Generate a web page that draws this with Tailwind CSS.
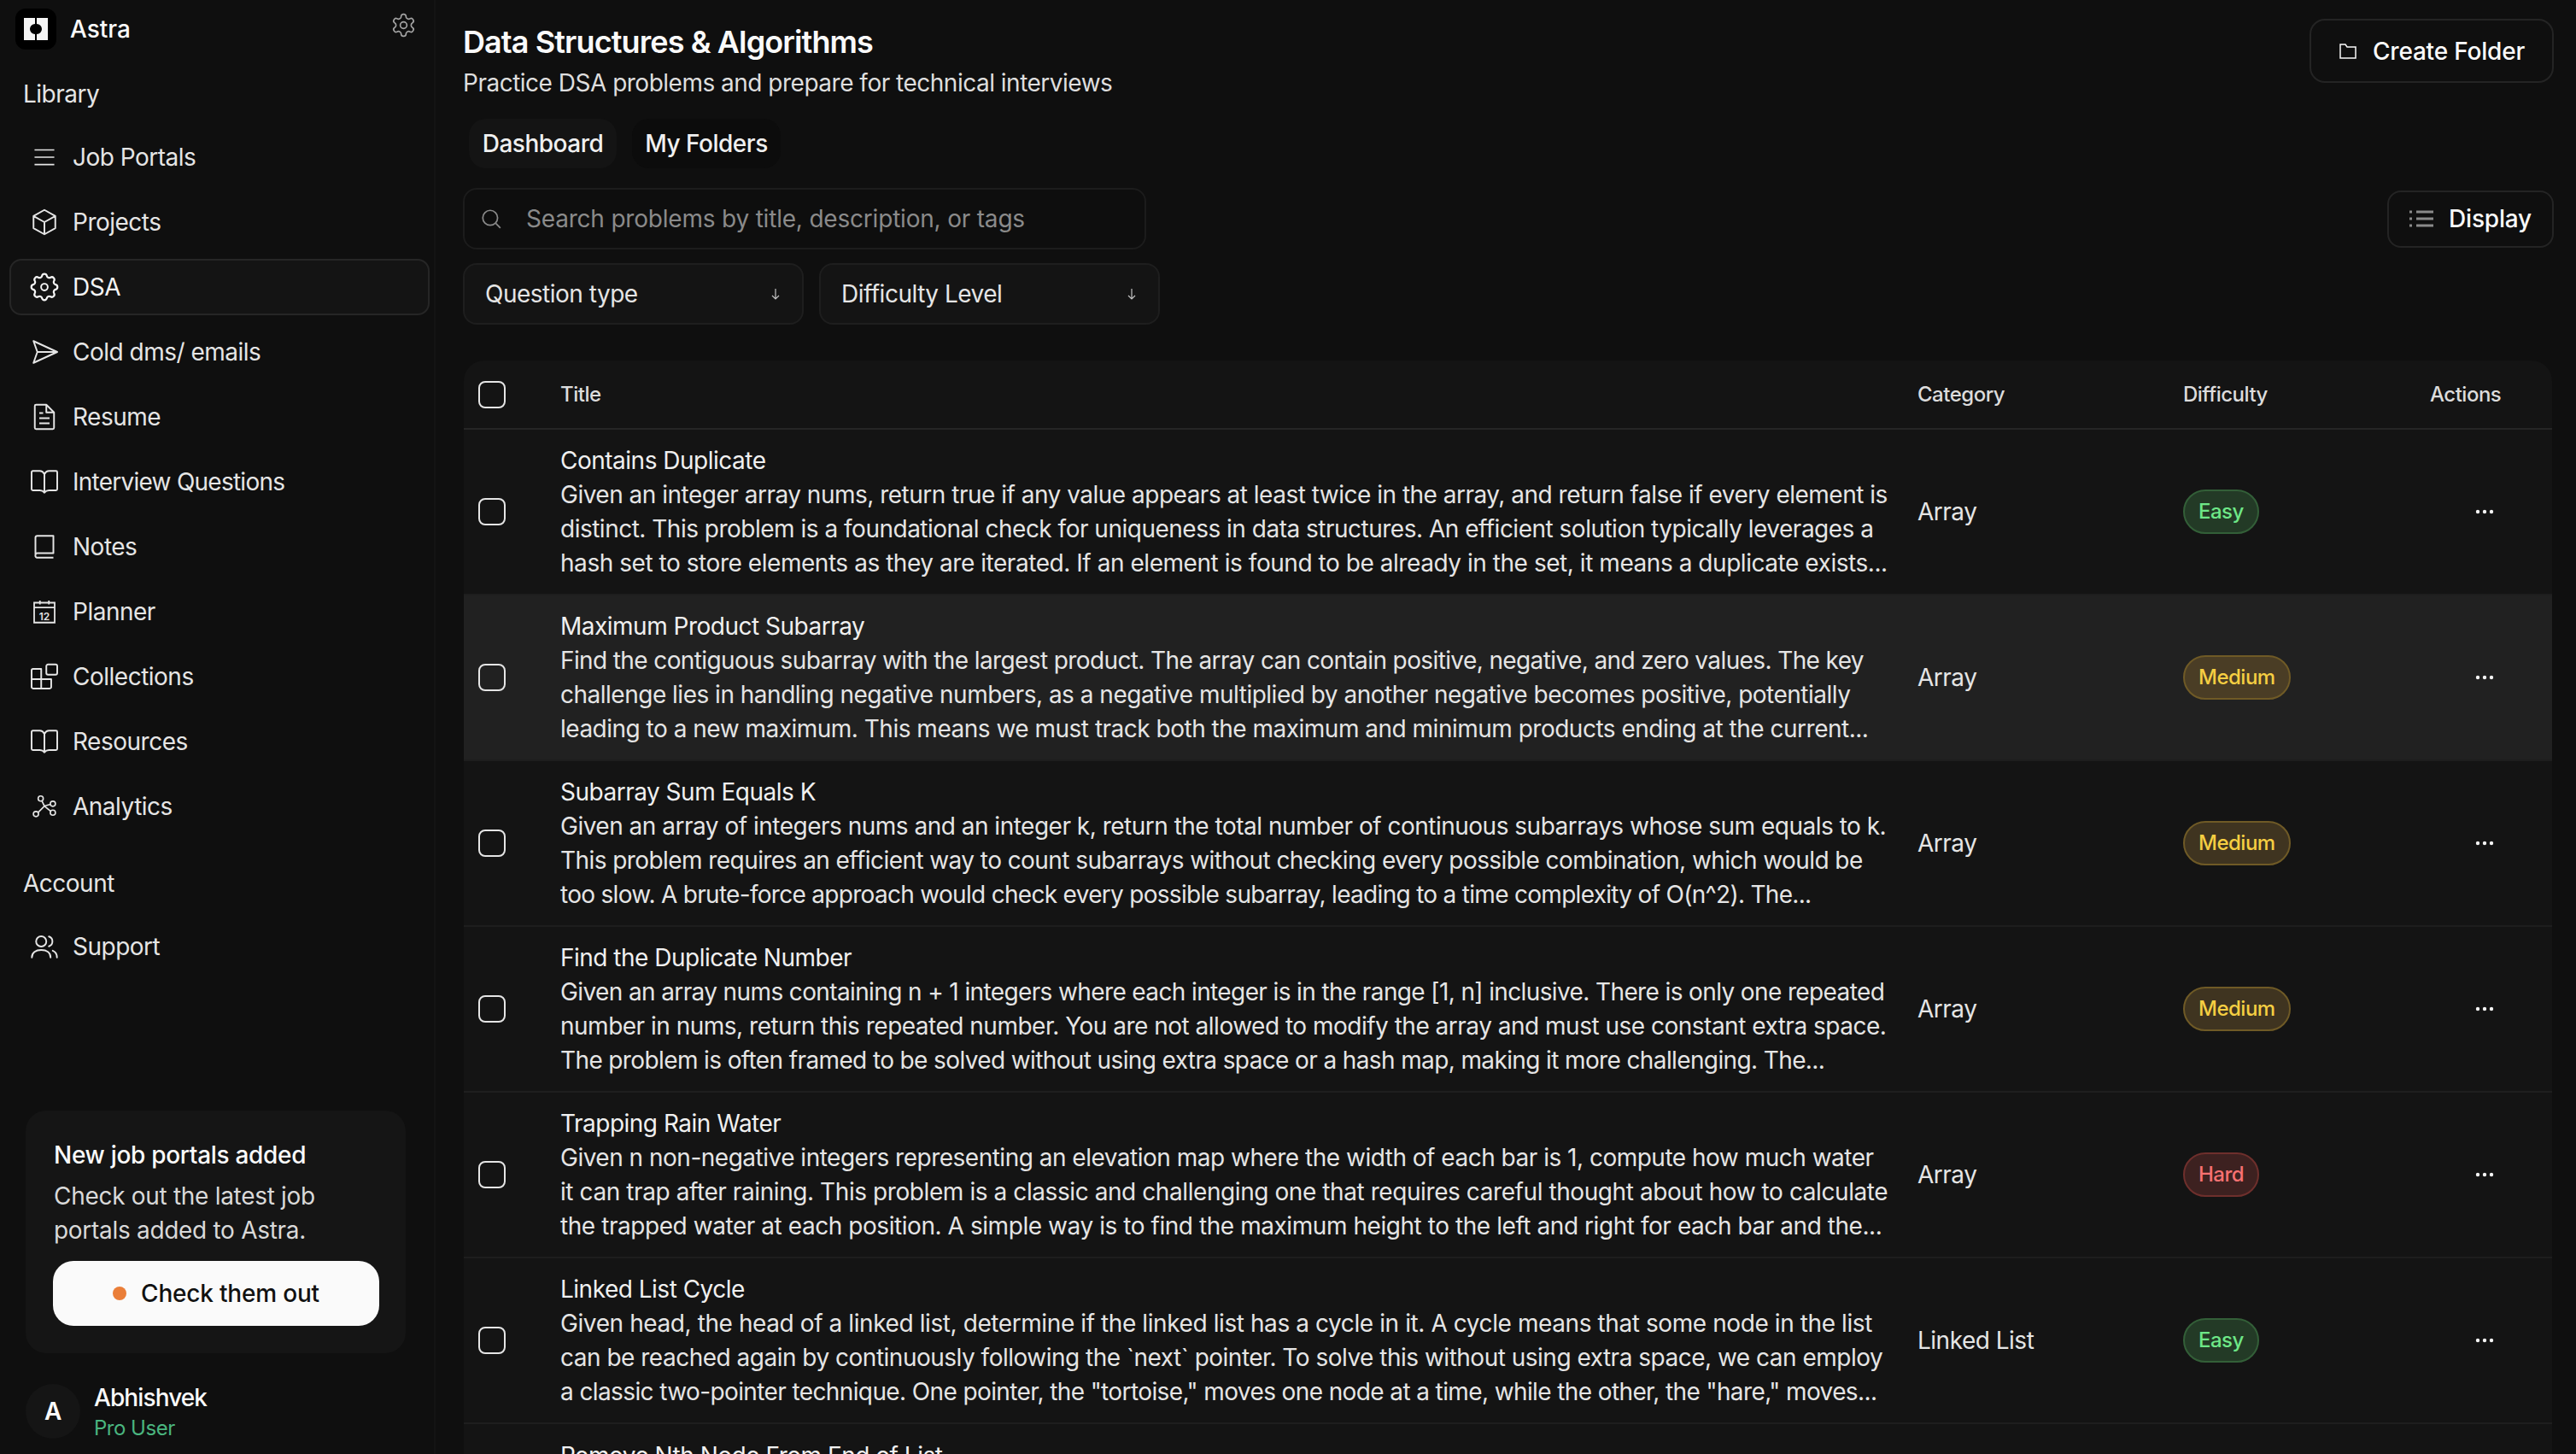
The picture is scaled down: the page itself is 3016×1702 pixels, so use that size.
<!DOCTYPE html>
<html lang="en">
<head>
  <meta charset="UTF-8">
  <meta name="viewport" content="width=device-width, initial-scale=1.0">
  <title>Astra - DSA</title>
  <script src="https://cdn.jsdelivr.net/npm/@tailwindcss/browser@4"></script>
</head>
<body class="bg-[#0f0f0f] text-[#e5e5e5] font-['Inter',sans-serif] text-[28px] tracking-[-0.5px] h-screen overflow-hidden flex">

  <!-- sidebar -->
  <aside class="w-[510px] h-[1702px] shrink-0 border-r-2 border-[#141414] flex flex-col pl-[11px] pr-[5px]">
    <div class="flex items-start pl-[7px] pt-[10px] pr-[15px] h-[76px]">
      <div class="w-[48px] h-[48px] rounded-[12px] bg-black flex items-center justify-center">
        <svg width="28" height="28" viewBox="0 0 28 28"><path fill="#f5f5f5" d="M0 1h13v7a6 6 0 0 0 0 12v7H0zM15 1h13v26H15v-7a6 6 0 0 0 0-12z"/></svg>
      </div>
      <span class="ml-[16px] mt-[7px] leading-[34px] font-medium text-[#fafafa] tracking-normal">Astra</span>
      <svg class="ml-auto mt-[4px]" width="31" height="31" viewBox="0 0 24 24" fill="none" stroke="#a3a3a3" stroke-width="1.3"><path d="M12.22 2h-.44a2 2 0 0 0-2 2v.18a2 2 0 0 1-1 1.73l-.43.25a2 2 0 0 1-2 0l-.15-.08a2 2 0 0 0-2.73.73l-.22.38a2 2 0 0 0 .73 2.73l.15.1a2 2 0 0 1 1 1.72v.51a2 2 0 0 1-1 1.74l-.15.09a2 2 0 0 0-.73 2.73l.22.38a2 2 0 0 0 2.73.73l.15-.08a2 2 0 0 1 2 0l.43.25a2 2 0 0 1 1 1.73V20a2 2 0 0 0 2 2h.44a2 2 0 0 0 2-2v-.18a2 2 0 0 1 1-1.73l.43-.25a2 2 0 0 1 2 0l.15.08a2 2 0 0 0 2.73-.73l.22-.39a2 2 0 0 0-.73-2.73l-.15-.08a2 2 0 0 1-1-1.74v-.5a2 2 0 0 1 1-1.74l.15-.09a2 2 0 0 0 .73-2.73l-.22-.38a2 2 0 0 0-2.73-.73l-.15.08a2 2 0 0 1-2 0l-.43-.25a2 2 0 0 1-1-1.73V4a2 2 0 0 0-2-2z"/><circle cx="12" cy="12" r="3"/></svg>
    </div>

    <div class="pl-[16px] h-[40px] mt-[14px] leading-[40px]">Library</div>

    <nav class="mt-[21px] flex flex-col gap-[10px]">
      <a class="h-[66px] flex items-center pl-[21px] gap-[15px] border-2 border-transparent rounded-[14px]">
        <svg class="w-[36px] h-[36px]" viewBox="0 0 24 24" fill="none" stroke="#e5e5e5" stroke-width="1.1"><path d="M4.300 6.300h15.400M4.300 12h15.400M4.300 17.700h15.400"/></svg>
        Job Portals
      </a>
      <a class="h-[66px] flex items-center pl-[21px] gap-[15px] border-2 border-transparent rounded-[14px]">
        <svg class="w-[36px] h-[36px]" viewBox="0 0 24 24" fill="none" stroke="#e5e5e5" stroke-width="1.3" stroke-linejoin="round"><path d="M12 2.500l8.500 4.800v9.400L12 21.500l-8.500-4.800V7.300zM3.700 7.400L12 12l8.300-4.600M12 12v9.500"/></svg>
        Projects
      </a>
      <a class="h-[66px] flex items-center pl-[21px] gap-[15px] border-2 border-[#262626] bg-[#141414] rounded-[14px] text-[#f5f5f5]">
        <svg class="w-[36px] h-[36px]" viewBox="0 0 24 24" fill="none" stroke="#f5f5f5" stroke-width="1.3"><path d="M10.325 4.317c.426 -1.756 2.924 -1.756 3.35 0a1.724 1.724 0 0 0 2.573 1.066c1.543 -.94 3.31 .826 2.37 2.37a1.724 1.724 0 0 0 1.065 2.572c1.756 .426 1.756 2.924 0 3.35a1.724 1.724 0 0 0 -1.066 2.573c.94 1.543 -.826 3.31 -2.37 2.37a1.724 1.724 0 0 0 -2.572 1.065c-.426 1.756 -2.924 1.756 -3.35 0a1.724 1.724 0 0 0 -2.573 -1.066c-1.543 .94 -3.31 -.826 -2.37 -2.37a1.724 1.724 0 0 0 -1.065 -2.572c-1.756 -.426 -1.756 -2.924 0 -3.35a1.724 1.724 0 0 0 1.066 -2.573c-.94 -1.543 .826 -3.31 2.37 -2.370c1 .608 2.296 .07 2.572 -1.065z" transform="translate(-1.600 -1.600) scale(1.133)"/><circle cx="12" cy="12" r="2.600"/></svg>
        DSA
      </a>
      <a class="h-[66px] flex items-center pl-[21px] gap-[15px] border-2 border-transparent rounded-[14px]">
        <svg class="w-[36px] h-[36px]" viewBox="0 0 24 24" fill="none" stroke="#e5e5e5" stroke-width="1.3" stroke-linejoin="round"><path d="M3.500 3.500L22 12 3.500 20.500 6.500 12zM6.500 12H22"/></svg>
        Cold dms/ emails
      </a>
      <a class="h-[66px] flex items-center pl-[21px] gap-[15px] border-2 border-transparent rounded-[14px]">
        <svg class="w-[36px] h-[36px]" viewBox="0 0 24 24" fill="none" stroke="#e5e5e5" stroke-width="1.3" stroke-linejoin="round"><path d="M5.500 2.500h8l6 6v12a1 1 0 0 1-1 1h-13a1 1 0 0 1-1-1v-17a1 1 0 0 1 1-1zM13.500 2.500v6h6M8 9h3M8 13h8M8 17h8"/></svg>
        Resume
      </a>
      <a class="h-[66px] flex items-center pl-[21px] gap-[15px] border-2 border-transparent rounded-[14px]">
        <svg class="w-[36px] h-[36px]" viewBox="0 0 24 24" fill="none" stroke="#e5e5e5" stroke-width="1.3" stroke-linejoin="round"><path d="M12 20.500c-1-1.300-2-1.800-3.500-1.800H3a1 1 0 0 1-1-1V4.500a1 1 0 0 1 1-1h5.500C10 3.500 11.200 4.500 12 6c.8-1.500 2-2.500 3.500-2.500H21a1 1 0 0 1 1 1v13.200a1 1 0 0 1-1 1h-5.500c-1.500 0-2.500.5-3.500 1.800zM12 6v14.500"/></svg>
        <span class="tracking-[-0.75px]">Interview Questions</span>
      </a>
      <a class="h-[66px] flex items-center pl-[21px] gap-[15px] border-2 border-transparent rounded-[14px]">
        <svg class="w-[36px] h-[36px]" viewBox="0 0 24 24" fill="none" stroke="#e5e5e5" stroke-width="1.3" stroke-linejoin="round"><path d="M5 18.300V5a1.500 1.500 0 0 1 1.500-1.500H19V17H6.500A1.500 1.500 0 0 0 5 18.500 1.500 1.500 0 0 0 6.500 20.500H19"/></svg>
        Notes
      </a>
      <a class="h-[66px] flex items-center pl-[21px] gap-[15px] border-2 border-transparent rounded-[14px]">
        <svg class="w-[36px] h-[36px]" viewBox="0 0 24 24" fill="none" stroke="#e5e5e5" stroke-width="1.200"><path d="M4 5h16v15.500H4zM4 8.800h16M8.500 3.400v3M15.500 3.400v3"/><text x="12" y="18.400" text-anchor="middle" font-size="8" font-weight="600" letter-spacing="0" fill="#e5e5e5" stroke="none" font-family="Inter, sans-serif">12</text></svg>
        Planner
      </a>
      <a class="h-[66px] flex items-center pl-[21px] gap-[15px] border-2 border-transparent rounded-[14px]">
        <svg class="w-[36px] h-[36px]" viewBox="0 0 24 24" fill="none" stroke="#e5e5e5" stroke-width="1.300" stroke-linejoin="round"><rect x="13.500" y="2.500" width="8.500" height="8" rx="1.300"/><path d="M3.200 6H9.500v8H2V7.200A1.200 1.200 0 0 1 3.200 6zM2 14h7.500v7.300H3.200A1.200 1.200 0 0 1 2 20.100zM9.500 14h7.800v6.100a1.200 1.200 0 0 1-1.200 1.200H9.500z"/></svg>
        Collections
      </a>
      <a class="h-[66px] flex items-center pl-[21px] gap-[15px] border-2 border-transparent rounded-[14px]">
        <svg class="w-[36px] h-[36px]" viewBox="0 0 24 24" fill="none" stroke="#e5e5e5" stroke-width="1.300" stroke-linejoin="round"><path d="M12 20.500c-1-1.300-2-1.800-3.500-1.800H3a1 1 0 0 1-1-1V4.500a1 1 0 0 1 1-1h5.500C10 3.500 11.200 4.500 12 6c.8-1.500 2-2.500 3.500-2.500H21a1 1 0 0 1 1 1v13.200a1 1 0 0 1-1 1h-5.500c-1.500 0-2.500.5-3.500 1.800zM12 6v14.500"/></svg>
        Resources
      </a>
      <a class="h-[66px] flex items-center pl-[21px] gap-[15px] border-2 border-transparent rounded-[14px]">
        <svg class="w-[36px] h-[36px]" viewBox="0 0 24 24" fill="none" stroke="#e5e5e5" stroke-width="1.100"><circle cx="9.100" cy="5.800" r="2"/><circle cx="5.400" cy="17.900" r="2"/><circle cx="18.600" cy="9.900" r="2"/><circle cx="18.600" cy="16.800" r="2"/><path d="M10 7.600l2 4.100M7 16.700l5-5M16.700 10.300l-4.700 1.400M16.900 15.700l-4.900-4"/></svg>
        Analytics
      </a>
    </nav>

    <div class="pl-[16px] h-[40px] mt-[37px] leading-[40px]">Account</div>

    <a class="mt-[21px] h-[66px] flex items-center pl-[21px] gap-[15px] border-2 border-transparent rounded-[14px]">
      <svg class="w-[36px] h-[36px]" viewBox="0 0 24 24" fill="none" stroke="#e5e5e5" stroke-width="1.300" stroke-linecap="round"><circle cx="9.500" cy="8" r="4"/><path d="M2.200 20.500c0-3.800 3-5.800 7.300-5.800s7.300 2 7.300 5.800M15.500 4.200a4 4 0 0 1 0 7.600M18.500 15.200c2 .8 3.300 2.800 3.300 5.300"/></svg>
      Support
    </a>

    <div class="mt-auto ml-[19px] w-[445px] h-[284px] rounded-[24px] bg-[#151515] px-[33px] pt-[32px]">
      <div class="font-medium text-[#fafafa] leading-[40px] tracking-[-0.3px]">New job portals added</div>
      <p class="mt-[8px] leading-[40px] text-[#d9d9d9] tracking-[-0.3px]">Check out the latest job<br>portals added to Astra.</p>
      <button class="mt-[16px] -ml-[1px] w-[382px] h-[76px] rounded-[24px] bg-[#fafafa] text-[#111111] font-medium tracking-[-0.2px] flex items-center justify-center gap-[17px]">
        <span class="w-[16px] h-[16px] rounded-full bg-[#ea7e38]"></span>Check them out
      </button>
    </div>

    <div class="ml-[19px] mt-[36px] mb-[18px] h-[64px] flex items-center gap-[16px]">
      <div class="w-[64px] h-[64px] rounded-full bg-[#151515] flex items-center justify-center font-semibold text-[#fafafa]">A</div>
      <div class="pt-[4px]">
        <div class="leading-[36px] font-medium text-[#fafafa] tracking-[-0.9px]">Abhishvek</div>
        <div class="leading-[36px] text-[24px] text-[#4ab57f]">Pro User</div>
      </div>
    </div>
  </aside>

  <!-- main -->
  <main class="flex-1 min-w-0 pl-[32px] pr-[26px]">
    <header class="flex justify-between items-start pt-[22px]">
      <div class="pt-[3px]">
        <h1 class="text-[36px] leading-[48px] font-semibold tracking-[-0.9px] text-[#fafafa]">Data Structures &amp; Algorithms</h1>
        <p class="mt-[4px] leading-[40px] text-[#dedede]">Practice DSA problems and prepare for technical interviews</p>
      </div>
      <button class="w-[286px] h-[75px] rounded-[18px] border-2 border-[#242424] flex items-center justify-center gap-[18px] font-medium tracking-[-0.2px] text-[#fafafa]">
        <svg width="22" height="22" viewBox="0 0 22 22" fill="none" stroke="#fafafa" stroke-width="1.500"><path d="M2 3h6l2 3h10v13H2z"/></svg>
        Create Folder
      </button>
    </header>

    <div class="flex gap-[18px] ml-[7px] mt-[22px] font-medium text-[#f0f0f0]">
      <button class="h-[58px] w-[173px] rounded-[20px] bg-[#141414]">Dashboard</button>
      <button class="h-[58px] w-[174px] rounded-[20px] bg-[#0c0c0c]">My Folders</button>
    </div>

    <div class="flex justify-between items-center mt-[23px]">
      <div class="w-[800px] h-[72px] rounded-[16px] border-2 border-[#1c1c1c] bg-[#0e0e0e] flex items-center pl-[18px] gap-[28px] text-[#8a8a8a] tracking-[-0.2px]">
        <svg width="26" height="26" viewBox="0 0 24 24" fill="none" stroke="#8a8a8a" stroke-width="1.600"><circle cx="11" cy="11" r="8"/><path d="M17 17l5 5"/></svg>
        Search problems by title, description, or tags
      </div>
      <button class="w-[195px] h-[67px] rounded-[16px] border-2 border-[#242424] flex items-center justify-center gap-[18px] font-medium tracking-[-0.2px] text-[#fafafa]">
        <svg width="28" height="22" viewBox="0 0 28 22" stroke-width="3"><path d="M8 3h20M8 11h20M8 19h20" stroke="#8a8a8a"/><path d="M0 3h3M0 11h3M0 19h3" stroke="#8a8a8a"/></svg>
        Display
      </button>
    </div>

    <div class="flex gap-[18px] mt-[16px]">
      <div class="w-[399px] h-[72px] rounded-[16px] border-2 border-[#1e1e1e] bg-[#141414] flex items-center justify-between pl-[24px] pr-[26px]">
        Question type
        <svg width="10" height="14" viewBox="0 0 10 14" fill="none" stroke="#c4c4c4" stroke-width="1.200"><path d="M5 1v12M1 9l4 4 4-4"/></svg>
      </div>
      <div class="w-[399px] h-[72px] rounded-[16px] border-2 border-[#1e1e1e] bg-[#141414] flex items-center justify-between pl-[24px] pr-[26px]">
        Difficulty Level
        <svg width="10" height="14" viewBox="0 0 10 14" fill="none" stroke="#c4c4c4" stroke-width="1.200"><path d="M5 1v12M1 9l4 4 4-4"/></svg>
      </div>
    </div>

    <!-- problems table -->
    <div class="mt-[42px] ml-[1px] w-[2445px] bg-[#141414] rounded-t-[24px]">
      <div class="grid grid-cols-[113px_1589px_311px_289px_1fr] items-center h-[81px] border-b-2 border-[#262626] text-[24px] font-medium text-[#dcdcdc]">
        <span class="ml-[17px] w-[32px] h-[32px] rounded-[8px] border-2 border-[#e5e5e5]"></span>
        <span>Title</span><span>Category</span><span>Difficulty</span><span>Actions</span>
      </div>

      <div class="grid grid-cols-[113px_1589px_311px_289px_1fr] items-center h-[194px] border-b-2 border-[#1e1e1e]">
        <span class="ml-[17px] w-[32px] h-[32px] rounded-[8px] border-2 border-[#e5e5e5]"></span>
        <div class="leading-[40px] whitespace-nowrap"><div class="text-[#f0f0f0]">Contains Duplicate</div>Given an integer array nums, return true if any value appears at least twice in the array, and return false if every element is<br>distinct. This problem is a foundational check for uniqueness in data structures. An efficient solution typically leverages a<br><span class="tracking-[-0.45px]">hash set to store elements as they are iterated. If an element is found to be already in the set, it means a duplicate exists...</span></div>
        <span>Array</span>
        <span class="justify-self-start h-[52px] px-[16px] flex items-center rounded-full border-2 border-[#335f38] bg-[#233a26] text-[#6ee787] text-[24px] font-medium">Easy</span>
        <svg class="ml-[53px]" width="22" height="6" viewBox="0 0 22 6" fill="#f5f5f5"><circle cx="3" cy="3" r="2.200"/><circle cx="11" cy="3" r="2.200"/><circle cx="19" cy="3" r="2.200"/></svg>
      </div>

      <div class="grid grid-cols-[113px_1589px_311px_289px_1fr] items-center h-[194px] border-b-2 border-[#1e1e1e] bg-[#212121]">
        <span class="ml-[17px] w-[32px] h-[32px] rounded-[8px] border-2 border-[#e5e5e5]"></span>
        <div class="leading-[40px] whitespace-nowrap"><div class="text-[#f0f0f0]">Maximum Product Subarray</div><span class="tracking-[-0.61px]">Find the contiguous subarray with the largest product. The array can contain positive, negative, and zero values. The key</span><br>challenge lies in handling negative numbers, as a negative multiplied by another negative becomes positive, potentially<br>leading to a new maximum. This means we must track both the maximum and minimum products ending at the current...</div>
        <span>Array</span>
        <span class="justify-self-start h-[52px] px-[16px] flex items-center rounded-full border-2 border-[#6f5a26] bg-[#4a3d25] text-[#f5ce42] text-[24px] font-medium">Medium</span>
        <svg class="ml-[53px]" width="22" height="6" viewBox="0 0 22 6" fill="#f5f5f5"><circle cx="3" cy="3" r="2.200"/><circle cx="11" cy="3" r="2.200"/><circle cx="19" cy="3" r="2.200"/></svg>
      </div>

      <div class="grid grid-cols-[113px_1589px_311px_289px_1fr] items-center h-[194px] border-b-2 border-[#1e1e1e]">
        <span class="ml-[17px] w-[32px] h-[32px] rounded-[8px] border-2 border-[#e5e5e5]"></span>
        <div class="leading-[40px] whitespace-nowrap"><div class="text-[#f0f0f0]">Subarray Sum Equals K</div>Given an array of integers nums and an integer k, return the total number of continuous subarrays whose sum equals to k.<br><span class="tracking-[-0.57px]">This problem requires an efficient way to count subarrays without checking every possible combination, which would be</span><br><span class="tracking-[-0.7px]">too slow. A brute-force approach would check every possible subarray, leading to a time complexity of O(n^2). The...</span></div>
        <span>Array</span>
        <span class="justify-self-start h-[52px] px-[16px] flex items-center rounded-full border-2 border-[#6f5a26] bg-[#3f3420] text-[#f5ce42] text-[24px] font-medium">Medium</span>
        <svg class="ml-[53px]" width="22" height="6" viewBox="0 0 22 6" fill="#f5f5f5"><circle cx="3" cy="3" r="2.200"/><circle cx="11" cy="3" r="2.200"/><circle cx="19" cy="3" r="2.200"/></svg>
      </div>

      <div class="grid grid-cols-[113px_1589px_311px_289px_1fr] items-center h-[194px] border-b-2 border-[#1e1e1e]">
        <span class="ml-[17px] w-[32px] h-[32px] rounded-[8px] border-2 border-[#e5e5e5]"></span>
        <div class="leading-[40px] whitespace-nowrap"><div class="text-[#f0f0f0]">Find the Duplicate Number</div><span class="tracking-[-0.62px]">Given an array nums containing n + 1 integers where each integer is in the range [1, n] inclusive. There is only one repeated</span><br>number in nums, return this repeated number. You are not allowed to modify the array and must use constant extra space.<br><span class="tracking-[-0.62px]">The problem is often framed to be solved without using extra space or a hash map, making it more challenging. The...</span></div>
        <span>Array</span>
        <span class="justify-self-start h-[52px] px-[16px] flex items-center rounded-full border-2 border-[#6f5a26] bg-[#3f3420] text-[#f5ce42] text-[24px] font-medium">Medium</span>
        <svg class="ml-[53px]" width="22" height="6" viewBox="0 0 22 6" fill="#f5f5f5"><circle cx="3" cy="3" r="2.200"/><circle cx="11" cy="3" r="2.200"/><circle cx="19" cy="3" r="2.200"/></svg>
      </div>

      <div class="grid grid-cols-[113px_1589px_311px_289px_1fr] items-center h-[194px] border-b-2 border-[#1e1e1e]">
        <span class="ml-[17px] w-[32px] h-[32px] rounded-[8px] border-2 border-[#e5e5e5]"></span>
        <div class="leading-[40px] whitespace-nowrap"><div class="text-[#f0f0f0]">Trapping Rain Water</div>Given n non-negative integers representing an elevation map where the width of each bar is 1, compute how much water<br><span class="tracking-[-0.42px]">it can trap after raining. This problem is a classic and challenging one that requires careful thought about how to calculate</span><br><span class="tracking-[-0.44px]">the trapped water at each position. A simple way is to find the maximum height to the left and right for each bar and the...</span></div>
        <span>Array</span>
        <span class="justify-self-start h-[52px] px-[16px] flex items-center rounded-full border-2 border-[#6e2f2c] bg-[#3d2120] text-[#f87171] text-[24px] font-medium">Hard</span>
        <svg class="ml-[53px]" width="22" height="6" viewBox="0 0 22 6" fill="#f5f5f5"><circle cx="3" cy="3" r="2.200"/><circle cx="11" cy="3" r="2.200"/><circle cx="19" cy="3" r="2.200"/></svg>
      </div>

      <div class="grid grid-cols-[113px_1589px_311px_289px_1fr] items-center h-[194px] border-b-2 border-[#1e1e1e]">
        <span class="ml-[17px] w-[32px] h-[32px] rounded-[8px] border-2 border-[#e5e5e5]"></span>
        <div class="leading-[40px] whitespace-nowrap"><div class="text-[#f0f0f0]">Linked List Cycle</div><span class="tracking-[-0.41px]">Given head, the head of a linked list, determine if the linked list has a cycle in it. A cycle means that some node in the list</span><br>can be reached again by continuously following the `next` pointer. To solve this without using extra space, we can employ<br><span class="tracking-[-0.61px]">a classic two-pointer technique. One pointer, the "tortoise," moves one node at a time, while the other, the "hare," moves...</span></div>
        <span>Linked List</span>
        <span class="justify-self-start h-[52px] px-[16px] flex items-center rounded-full border-2 border-[#335f38] bg-[#233a26] text-[#6ee787] text-[24px] font-medium">Easy</span>
        <svg class="ml-[53px]" width="22" height="6" viewBox="0 0 22 6" fill="#f5f5f5"><circle cx="3" cy="3" r="2.200"/><circle cx="11" cy="3" r="2.200"/><circle cx="19" cy="3" r="2.200"/></svg>
      </div>

      <div class="grid grid-cols-[113px_1589px_311px_289px_1fr] h-[194px]">
        <span></span>
        <div class="leading-[40px] pt-[17px] text-[#f0f0f0]">Remove Nth Node From End of List</div>
      </div>
    </div>
  </main>
</body>
</html>
